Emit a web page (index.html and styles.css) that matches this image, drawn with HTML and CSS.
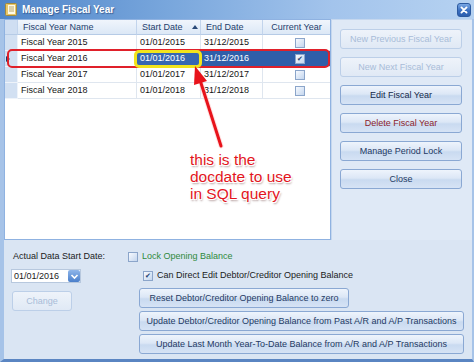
FILE: index.html
```html
<!DOCTYPE html>
<html>
<head>
<meta charset="utf-8">
<link rel="stylesheet" href="styles.css">
</head>
<body>
<div class="window">
  <div class="titlebar">
    <svg class="app-icon" width="12" height="13" viewBox="0 0 12 13">
      <rect x="0.5" y="0.5" width="11" height="12" rx="1" fill="#e9c86a" stroke="#a58a3a"/>
      <rect x="3" y="2" width="7" height="9" fill="#fffbe8"/>
      <line x1="4" y1="4" x2="9" y2="4" stroke="#b9a56a"/>
      <line x1="4" y1="6" x2="9" y2="6" stroke="#b9a56a"/>
      <line x1="4" y1="8" x2="9" y2="8" stroke="#b9a56a"/>
    </svg>
    <span class="title">Manage Fiscal Year</span>
    <span class="close">
      <svg width="14" height="14" viewBox="0 0 14 14">
        <path d="M4 4 L10 10 M10 4 L4 10" stroke="#fff" stroke-width="2.2" stroke-linecap="round"/>
      </svg>
    </span>
  </div>
  <div class="body">
    <div class="top">
      <div class="grid">
        <div class="row head">
          <div class="c ind"></div>
          <div class="c name">Fiscal Year Name</div>
          <div class="c start">Start Date <span class="sort"></span></div>
          <div class="c end">End Date</div>
          <div class="c cur">Current Year</div>
        </div>
        <div class="row">
          <div class="c ind"></div>
          <div class="c name">Fiscal Year 2015</div>
          <div class="c start">01/01/2015</div>
          <div class="c end">31/12/2015</div>
          <div class="c cur"><span class="chk"></span></div>
        </div>
        <div class="row sel">
          <div class="c ind"><span class="pointer"></span></div>
          <div class="c name">Fiscal Year 2016</div>
          <div class="c start">01/01/2016</div>
          <div class="c end">31/12/2016</div>
          <div class="c cur"><span class="chk on">&#10004;</span></div>
        </div>
        <div class="row">
          <div class="c ind"></div>
          <div class="c name">Fiscal Year 2017</div>
          <div class="c start">01/01/2017</div>
          <div class="c end">31/12/2017</div>
          <div class="c cur"><span class="chk"></span></div>
        </div>
        <div class="row">
          <div class="c ind"></div>
          <div class="c name">Fiscal Year 2018</div>
          <div class="c start">01/01/2018</div>
          <div class="c end">31/12/2018</div>
          <div class="c cur"><span class="chk"></span></div>
        </div>
        <div class="mark-red"></div>
        <div class="mark-yellow"></div>
      </div>
      <div class="panel">
        <div class="btn disabled">New Previous Fiscal Year</div>
        <div class="btn disabled">New Next Fiscal Year</div>
        <div class="btn strong">Edit Fiscal Year</div>
        <div class="btn danger">Delete Fiscal Year</div>
        <div class="btn">Manage Period Lock</div>
        <div class="btn">Close</div>
      </div>
    </div>
    <div class="bottom">
      <div class="left">
        <div class="label">Actual Data Start Date:</div>
        <div class="date">
          <span class="date-text">01/01/2016</span>
          <span class="drop">
            <svg width="9" height="9" viewBox="0 0 9 9"><path d="M1.5 3 L4.5 6 L7.5 3" fill="none" stroke="#fff" stroke-width="1.6"/></svg>
          </span>
        </div>
        <div class="btn disabled change">Change</div>
      </div>
      <div class="right">
        <div class="check-line lock"><span class="chk"></span><span class="green">Lock Opening Balance</span></div>
        <div class="check-line edit"><span class="chk on">&#10004;</span><span>Can Direct Edit Debtor/Creditor Opening Balance</span></div>
        <div class="btn reset">Reset Debtor/Creditor Opening Balance to zero</div>
        <div class="btn wide">Update Debtor/Creditor Opening Balance from Past A/R and A/P Transactions</div>
        <div class="btn wide">Update Last Month Year-To-Date Balance from A/R and A/P Transactions</div>
      </div>
    </div>
  </div>
  <svg class="arrow" width="474" height="362" viewBox="0 0 474 362">
    <line x1="221" y1="146" x2="200" y2="80" stroke="#ffd0d0" stroke-width="5" stroke-linecap="round" opacity="0.6"/>
    <line x1="221" y1="146" x2="200" y2="80" stroke="#e8131b" stroke-width="3" stroke-linecap="round"/>
    <polygon points="195,66 207,81 194,85" fill="#e8131b"/>
  </svg>
  <div class="note">this is the<br>docdate to use<br>in SQL query</div>
</div>
</body>
</html>
```

FILE: styles.css
```css
* { box-sizing: border-box; }
html, body { margin: 0; padding: 0; }
body {
  width: 474px;
  height: 362px;
  overflow: hidden;
  font-family: "Liberation Sans", Arial, sans-serif;
  font-size: 9px;
  color: #1b1b1b;
  background: #dae5f3;
}
.window {
  position: relative;
  width: 474px;
  height: 362px;
  display: flex;
  flex-direction: column;
}
.titlebar {
  height: 19px;
  flex: none;
  display: flex;
  align-items: center;
  padding-left: 5px;
  background: linear-gradient(to right, #4f85c9 0%, #78a6dc 35%, #a3c4ec 70%, #b6d2f1 100%);
}
.app-icon { flex: none; }
.title {
  margin-left: 5px;
  color: #fff;
  font-weight: bold;
  font-size: 10px;
  text-shadow: 1px 1px 1px rgba(30, 60, 110, 0.6);
  flex: 1;
}
.close {
  width: 14px;
  height: 14px;
  margin-right: 3px;
  border-radius: 3px;
  border: 1px solid #2c5aa0;
  background: linear-gradient(#7aa8e4, #3a6fc0 55%, #2c5eae);
  display: flex;
  align-items: center;
  justify-content: center;
}
.close svg { width: 12px; height: 12px; }
.body {
  flex: 1;
  display: flex;
  flex-direction: column;
  background: #dae5f3;
  border-left: 4px solid #a6c3e8;
  border-right: 2px solid #a6c3e8;
  border-bottom: 3px solid #5a85c2;
}
.top {
  display: flex;
  height: 221px;
  flex: none;
}
.grid {
  position: relative;
  width: 327px;
  flex: none;
  background: #fff;
  border: 1px solid #8fb2e1;
}
.row {
  display: grid;
  grid-template-columns: 13px 119px 64px 62px 67px;
  height: 16px;
}
.row .c {
  border-right: 1px solid #dfe6ef;
  border-bottom: 1px solid #dfe6ef;
  padding-left: 3px;
  line-height: 15px;
  white-space: nowrap;
  overflow: hidden;
  color: #151515;
}
.row .c.cur { border-right: none; display: flex; align-items: center; justify-content: center; padding-left: 0; }
.row .c.ind {
  background: #d2e0f2;
  border-right: 1px solid #eef3fa;
  border-bottom: 1px solid #eef3fa;
  padding-left: 0;
  position: relative;
}
.row.head { height: 15px; }
.row.head .c {
  background: linear-gradient(#f0f5fc, #dce8f6);
  color: #1e3d6c;
  padding-left: 5px;
  line-height: 14px;
  border-right: 1px solid #c2d4ec;
  border-bottom: 1px solid #b6cbe6;
  position: relative;
}
.row.head .c.ind { background: #cfdef2; padding-left: 0; }
.row.head .c.cur { justify-content: center; padding-left: 0; border-right: none; }
.sort {
  position: absolute;
  left: 55px;
  top: 5px;
  width: 0;
  height: 0;
  border-left: 3px solid transparent;
  border-right: 3px solid transparent;
  border-bottom: 4px solid #2a4a78;
}
.row.sel .c.start,
.row.sel .c.end,
.row.sel .c.cur {
  background: #2f5ea9;
  color: #fff;
  border-right-color: #2f5ea9;
}
.row.sel .c.start { background: #3667b2; }
.pointer {
  position: absolute;
  left: 1px;
  top: 5px;
  width: 0;
  height: 0;
  border-top: 3px solid transparent;
  border-bottom: 3px solid transparent;
  border-left: 4px solid #1d3a6a;
}
.chk {
  display: inline-flex;
  align-items: center;
  justify-content: center;
  width: 10px;
  height: 10px;
  border: 1px solid #8ba5ca;
  background: linear-gradient(135deg, #f7faff, #c4d6ee);
  font-size: 7px;
  line-height: 1;
  color: #1d3b6c;
  flex: none;
}
.row .c.cur .chk { margin-left: 6px; }
.mark-red {
  position: absolute;
  left: 2px;
  top: 29px;
  width: 323px;
  height: 19px;
  border: 2px solid #e0202a;
  border-radius: 5px;
}
.mark-yellow {
  position: absolute;
  left: 129px;
  top: 30px;
  width: 68px;
  height: 18px;
  border: 3px solid #f2e41c;
  border-radius: 5px;
}
.panel {
  flex: 1;
  display: flex;
  flex-direction: column;
  gap: 8px;
  padding: 9px 0 0 8px;
  background: #dfe9f6;
  border-top: 1px solid #c5d7ee;
  border-left: 1px solid #c5d7ee;
}
.btn {
  height: 20px;
  border: 1px solid #8aa8d3;
  border-radius: 3px;
  background: linear-gradient(#eef4fc 0%, #dce7f6 45%, #c9daf0 55%, #d6e3f5 100%);
  color: #1f3a64;
  display: flex;
  align-items: center;
  justify-content: center;
  white-space: nowrap;
}
.panel .btn { width: 122px; }
.btn.disabled {
  border-color: #bccfe8;
  background: linear-gradient(#eef3fa, #e0e9f5);
  color: #a8bcd8;
}
.btn.strong { color: #13294a; }
.btn.danger { color: #8c1d2c; }
.bottom {
  flex: 1;
  display: flex;
}
.left {
  width: 124px;
  flex: none;
  padding: 10px 0 0 9px;
  display: flex;
  flex-direction: column;
}
.label { line-height: 12px; color: #1b1b1b; }
.date {
  margin-top: 7px;
  margin-left: -2px;
  width: 70px;
  height: 14px;
  display: flex;
  align-items: center;
  background: #fff;
  border: 1px solid #b7c8de;
}
.date-text { flex: 1; padding-left: 2px; line-height: 12px; }
.drop {
  width: 12px;
  height: 12px;
  border-radius: 2px;
  background: linear-gradient(#8fb6ea, #4a7fcb);
  display: flex;
  align-items: center;
  justify-content: center;
}
.change {
  margin-top: 8px;
  width: 60px;
  margin-left: -1px;
}
.right {
  flex: 1;
  display: flex;
  flex-direction: column;
  padding: 11px 0 0 0;
}
.check-line {
  display: flex;
  align-items: center;
  gap: 4px;
  height: 11px;
  line-height: 11px;
}
.check-line.edit { margin-top: 8px; padding-left: 15px; }
.green { color: #2f8a3c; }
.right .btn { margin-left: 11px; }
.btn.reset { margin-top: 7px; width: 210px; }
.btn.wide { margin-top: 3px; width: 325px; }
.arrow {
  position: absolute;
  left: 0;
  top: 0;
  pointer-events: none;
}
.note {
  position: absolute;
  left: 190px;
  top: 151px;
  font-family: "Liberation Sans", Arial, sans-serif;
  font-size: 15.5px;
  line-height: 17px;
  color: #e3151d;
  text-shadow: -1px -1px 0 #fff, 1px -1px 0 #fff, -1px 1px 0 #fff, 1px 1px 0 #fff, 1px 2px 2px rgba(60, 0, 0, 0.45);
}
```
